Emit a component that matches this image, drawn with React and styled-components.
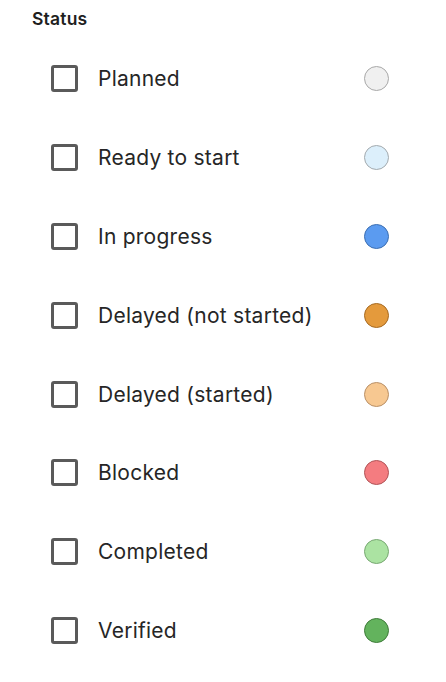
import styled, { createGlobalStyle } from 'styled-components';

const GlobalStyle = createGlobalStyle`
  body {
    margin: 0;
    background: #ffffff;
    font-family: Inter, "Noto Sans", sans-serif;
    color: #222222;
  }
`;

const Panel = styled.div`
  padding: 8px 32px 0 32px;
`;

const Title = styled.div`
  font-size: 17.5px;
  font-weight: 600;
  line-height: 22px;
  letter-spacing: 0.2px;
  color: #1f1f1f;
`;

const List = styled.ul`
  list-style: none;
  margin: 9.6px 0 0 0;
  padding: 0 0 0 19px;
  width: 338px;
`;

const Row = styled.li`
  display: flex;
  align-items: center;
  height: 78.8px;
`;

const Box = styled.span`
  box-sizing: border-box;
  width: 27px;
  height: 27px;
  border: 3px solid #5a5a5a;
  border-radius: 3px;
  flex-shrink: 0;
`;

const Label = styled.span`
  flex: 1;
  margin-left: 20px;
  font-size: 21px;
  letter-spacing: 0.25px;
  color: #262626;
`;

const Dot = styled.span`
  box-sizing: border-box;
  width: 25px;
  height: 25px;
  border-radius: 50%;
  background: ${(p) => p.fill};
  border: 1.5px solid ${(p) => p.edge};
  flex-shrink: 0;
`;

const statuses = [
  { name: 'Planned', fill: '#f0f0f0', edge: '#a8a8a8' },
  { name: 'Ready to start', fill: '#dceffb', edge: '#a3aaae' },
  { name: 'In progress', fill: '#5b9bf0', edge: '#3c6fb2' },
  { name: 'Delayed (not started)', fill: '#e49a3c', edge: '#a66a22' },
  { name: 'Delayed (started)', fill: '#f7c891', edge: '#b99067' },
  { name: 'Blocked', fill: '#f47c80', edge: '#b05457' },
  { name: 'Completed', fill: '#abe3a2', edge: '#78a872' },
  { name: 'Verified', fill: '#63b35d', edge: '#3f7c3a' },
];

const App = () => (
  <>
    <GlobalStyle />
    <Panel>
      <Title>Status</Title>
      <List>
        {statuses.map((s) => (
          <Row key={s.name}>
            <Box />
            <Label>{s.name}</Label>
            <Dot fill={s.fill} edge={s.edge} />
          </Row>
        ))}
      </List>
    </Panel>
  </>
);

export default App;
